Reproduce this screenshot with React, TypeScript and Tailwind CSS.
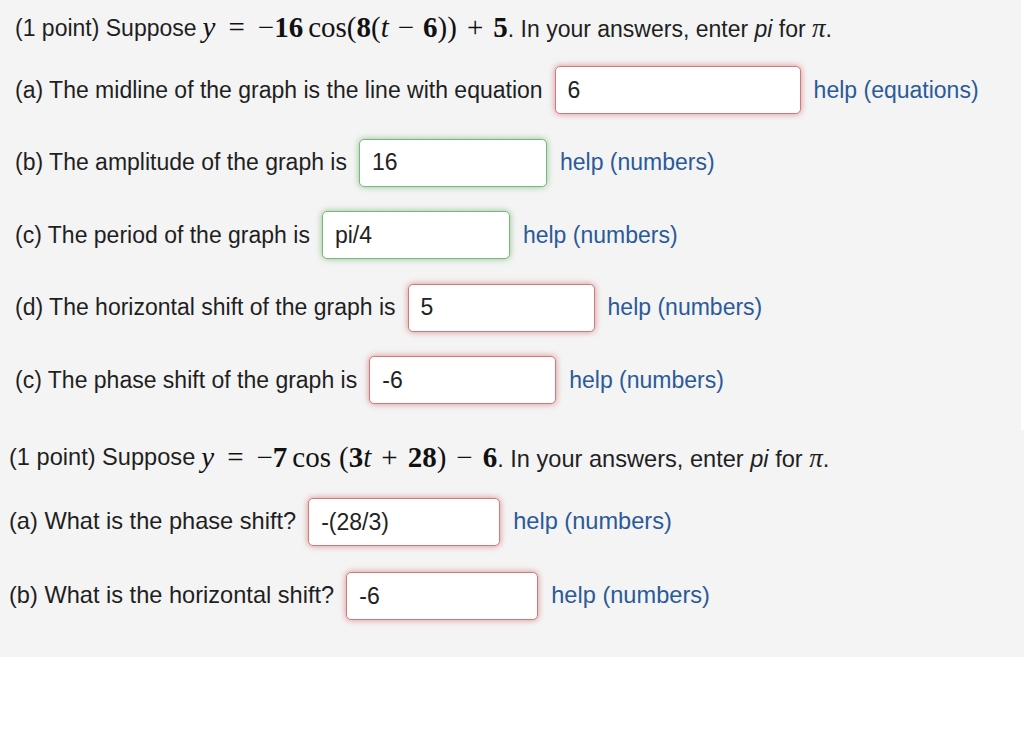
const SANS = "font-['Liberation_Sans',Arial,sans-serif]";

type Row = {
  label: string;
  value: string;
  ok: boolean;
  width: number;
  help: string;
};

const FIRST: Row[] = [
  { label: "(a) The midline of the graph is the line with equation", value: "6", ok: false, width: 246, help: "help (equations)" },
  { label: "(b) The amplitude of the graph is", value: "16", ok: true, width: 188, help: "help (numbers)" },
  { label: "(c) The period of the graph is", value: "pi/4", ok: true, width: 188, help: "help (numbers)" },
  { label: "(d) The horizontal shift of the graph is", value: "5", ok: false, width: 187, help: "help (numbers)" },
  { label: "(c) The phase shift of the graph is", value: "-6", ok: false, width: 187, help: "help (numbers)" },
];

const SECOND: Row[] = [
  { label: "(a) What is the phase shift?", value: "-(28/3)", ok: false, width: 192, help: "help (numbers)" },
  { label: "(b) What is the horizontal shift?", value: "-6", ok: false, width: 192, help: "help (numbers)" },
];

function AnswerRow({ row }: { row: Row }) {
  return (
    <div className="flex h-[48px] items-center whitespace-nowrap">
      <span>{row.label}</span>
      <input
        readOnly
        value={row.value}
        style={{ width: row.width }}
        className={[
          "ml-[12px] h-[48px] rounded-[5px] border bg-white px-[12px] text-[23px] text-[#222] outline-none",
          row.ok
            ? "border-[#79b879] shadow-[0_0_6px_rgba(80,160,80,0.6)]"
            : "border-[#d27a7a] shadow-[0_0_6px_rgba(200,70,70,0.6)]",
        ].join(" ")}
      />
      <a href="#" className="ml-[13px] text-[#2b5a98]">{row.help}</a>
    </div>
  );
}

// trailing text shared by both problems
function Tail() {
  return (
    <span>
      . In your answers, enter <i>pi</i> for{" "}
      <span className="font-['Liberation_Serif',serif] text-[27px] italic">π</span>.
    </span>
  );
}

function MathOne() {
  return (
    <span className="ml-[6px] font-['Liberation_Serif',serif] text-[29px] text-[#111]">
      <i>y</i>
      <span className="mx-[13px]">=</span>
      <span>−</span>
      <b>16</b>
      <span className="ml-[5px]">cos(</span>
      <b>8</b>(<i>t</i>
      <span className="mx-[9px]">−</span>
      <b>6</b>))
      <span className="mx-[10px]">+</span>
      <b>5</b>
    </span>
  );
}

function MathTwo() {
  return (
    <span className="ml-[6px] font-['Liberation_Serif',serif] text-[29px] text-[#111]">
      <i>y</i>
      <span className="mx-[13px]">=</span>
      <span>−</span>
      <b>7</b>
      <span className="ml-[5px]">cos</span>
      <span className="ml-[8px]">(</span>
      <b>3</b><i>t</i>
      <span className="mx-[10px]">+</span>
      <b>28</b>)
      <span className="mx-[10px]">−</span>
      <b>6</b>
    </span>
  );
}

export default function App() {
  return (
    <div className={`${SANS} min-h-[731px] bg-white text-[23px] text-[#1f1f1f]`}>
      <section className="w-[1021px] bg-[#f4f4f4] pl-[15px] pt-[12px] pb-[26px]">
        <div className="flex h-[32px] items-center whitespace-nowrap">
          <span>(1 point) Suppose</span>
          <MathOne />
          <Tail />
        </div>
        <div className="mt-[22px] flex flex-col gap-[24.5px]">
          {FIRST.map((r, i) => (
            <AnswerRow key={i} row={r} />
          ))}
        </div>
      </section>

      <section className="w-full bg-[#f4f4f4] pl-[9px] pt-[12px] pb-[37px] text-[23.6px]">
        <div className="flex h-[32px] items-center whitespace-nowrap">
          <span>(1 point) Suppose</span>
          <MathTwo />
          <Tail />
        </div>
        <div className="mt-[24px] flex flex-col gap-[26px]">
          {SECOND.map((r, i) => (
            <AnswerRow key={i} row={r} />
          ))}
        </div>
      </section>
    </div>
  );
}
